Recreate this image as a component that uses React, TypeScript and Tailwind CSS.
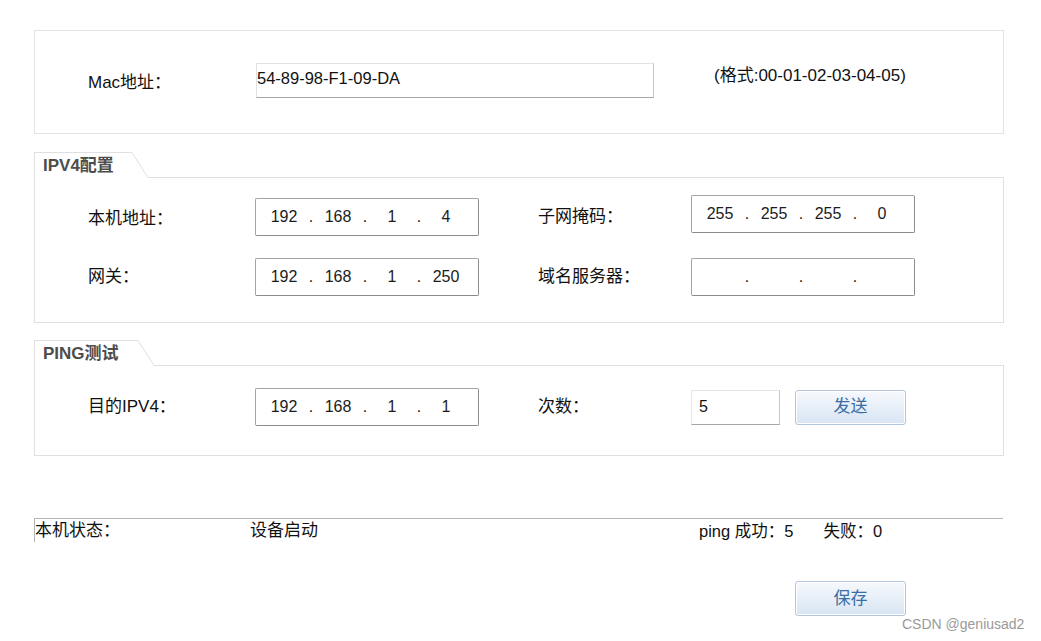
const cjk = "font-['Tahoma','Liberation_Sans','Noto_Sans_CJK_SC',sans-serif]";

function IpBox({ parts, className = "" }: { parts: string[]; className?: string }) {
  return (
    <div
      className={`flex h-[38px] w-[224px] items-center rounded-[2px] border border-[#a4a4a4] border-b-[#8c8c8c] border-r-[#8c8c8c] bg-white pl-[8px] text-[16px] text-[#1c1c1c] ${className}`}
    >
      {parts.map((p, i) => (
        <div key={i} className="flex items-center">
          <span className="w-[40px] text-center leading-none">{p}</span>
          {i < 3 && <span className="w-[14px] text-center leading-none">.</span>}
        </div>
      ))}
    </div>
  );
}

function Tab({ title, w }: { title: string; w: string }) {
  return (
    <div className="flex h-[26px] items-stretch">
      <div className={`flex items-center border-l border-t border-[#e0e0e0] pl-[8px] text-[17px] font-bold text-[#4d4d4d] ${w}`}>
        {title}
      </div>
      <svg width="16" height="26" viewBox="0 0 16 26" className="block">
        <line x1="0" y1="0.5" x2="16" y2="25.5" stroke="#e0e0e0" strokeWidth="1" />
      </svg>
      <div className="flex-1 border-b border-[#e0e0e0]" />
    </div>
  );
}

function Btn({ label }: { label: string }) {
  return (
    <button className="h-[35px] w-[111px] rounded-[3px] border border-[#b3c5da] bg-gradient-to-b from-[#f6f9fd] to-[#d8e5f3] text-[17px] text-[#3b6da6] shadow-[inset_0_0_0_1px_#ffffff]">
      {label}
    </button>
  );
}

export default function App() {
  return (
    <div className={`relative h-[641px] w-[1041px] overflow-hidden bg-white text-[#111] ${cjk}`}>
      <div className="flex flex-col pl-[34px] pt-[30px]">
        {/* mac */}
        <div className="h-[104px] w-[970px] border border-[#e3e3e3] pt-[32px]">
          <div className="flex items-start">
            <div className="w-[221px] pl-[53px] pt-[7px] text-[17px]">Mac地址：</div>
            <div className="flex h-[35px] w-[398px] items-start border border-[#e2e2e2] border-b-[#a6a6a6] border-r-[#c6c6c6] pt-[2px] text-[16.5px]">
              54-89-98-F1-09-DA
            </div>
            <div className="ml-[60px] text-[17px]">(格式:00-01-02-03-04-05)</div>
          </div>
        </div>

        {/* ipv4 */}
        <div className="mt-[18px] w-[970px]">
          <Tab title="IPV4配置" w="w-[98px]" />
          <div className="flex h-[145px] flex-col gap-[22px] border-b border-l border-r border-[#e0e0e0] pt-[20px]">
            <div className="flex items-center">
              <div className="w-[220px] pl-[53px] pt-[4px] text-[17px]">本机地址：</div>
              <IpBox parts={["192", "168", "1", "4"]} />
              <div className="w-[212px] pl-[59px] text-[17px]">子网掩码：</div>
              <IpBox parts={["255", "255", "255", "0"]} className="-mt-[6px]" />
            </div>
            <div className="flex items-center">
              <div className="w-[220px] pl-[53px] text-[17px]">网关：</div>
              <IpBox parts={["192", "168", "1", "250"]} />
              <div className="w-[212px] pl-[59px] text-[17px]">域名服务器：</div>
              <IpBox parts={["", "", "", ""]} className="h-[36px]" />
            </div>
          </div>
        </div>

        {/* ping */}
        <div className="mt-[17px] w-[970px]">
          <Tab title="PING测试" w="w-[104px]" />
          <div className="flex h-[90px] flex-col border-b border-l border-r border-[#e0e0e0] pt-[22px]">
            <div className="flex items-center">
              <div className="w-[220px] pl-[53px] text-[17px]">目的IPV4：</div>
              <IpBox parts={["192", "168", "1", "1"]} className="h-[37px]" />
              <div className="w-[212px] pl-[59px] text-[17px]">次数：</div>
              <div className="flex h-[35px] w-[89px] items-start border border-[#e6e6e6] border-b-[#a6a6a6] border-r-[#c6c6c6] pl-[7px] pt-[4px] text-[16px]">
                5
              </div>
              <div className="ml-[15px]">
                <Btn label="发送" />
              </div>
            </div>
          </div>
        </div>

        {/* status */}
        <div className="mt-[62px] flex h-[24px] w-[969px] items-start border-l border-t border-[#b5b5b5] text-[17px] leading-[24px]">
          <div className="w-[215px]">本机状态：</div>
          <div className="w-[449px]">设备启动</div>
          <div className="text-[16.5px]">
            ping 成功：5<span className="ml-[30px]">失败：0</span>
          </div>
        </div>

        <div className="ml-[761px] mt-[39px]">
          <Btn label="保存" />
        </div>
      </div>

      <div className="absolute left-[902px] top-[614px] font-['Liberation_Sans',sans-serif] text-[14px] text-[#9a9a9a]">
        CSDN @geniusad2
      </div>
    </div>
  );
}
